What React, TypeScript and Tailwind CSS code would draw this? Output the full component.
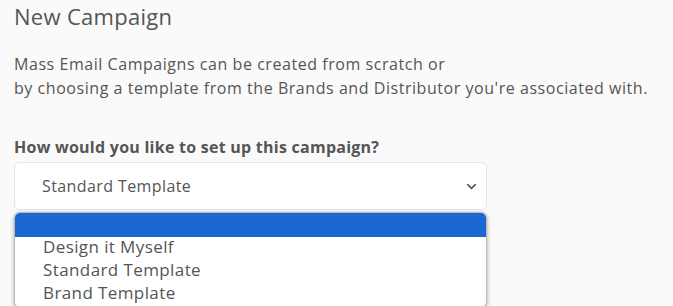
import { ChevronDown } from "lucide-react";

const options = ["Design it Myself", "Standard Template", "Brand Template"];

export default function App() {
  return (
    <div className="h-[306px] w-[673px] overflow-hidden bg-[#fafafa] px-[14px] pt-[2px] text-[#555] [font-family:'Open_Sans',sans-serif]">
      <h1 className="text-[22px] leading-[28px] font-normal tracking-[0.3px] text-[#555]">New Campaign</h1>

      <p className="mt-[22px] text-[16px] leading-[24px] tracking-[0.55px]">
        Mass Email Campaigns can be created from scratch or
        <br />
        by choosing a template from the Brands and Distributor you're associated with.
      </p>

      <label className="mt-[35px] block text-[16px] leading-[24px] font-bold tracking-[0.25px] text-[#555]">
        How would you like to set up this campaign?
      </label>

      <div className="relative mt-[3px] w-[473px]">
        <div className="flex h-[48px] items-center justify-between rounded-[5px] border border-[#e6e6e6] bg-white pr-[7px] pl-[27px] text-[16px] tracking-[0.4px]">
          <span>Standard Template</span>
          <ChevronDown size={15} strokeWidth={2.5} className="text-[#555]" />
        </div>

        <div className="absolute top-[50px] left-0 w-[473px] overflow-hidden rounded-[6px] border border-[#bbb] bg-white shadow-[0_1px_4px_rgba(0,0,0,0.35)]">
          <div className="h-[24px] bg-[#1a67d2]" />
          <ul className="-mt-[2px] pb-[3px] text-[17px] leading-[23px] tracking-[0.4px]">
            {options.map((o) => (
              <li key={o} className="pl-[28px]">
                {o}
              </li>
            ))}
          </ul>
        </div>
      </div>
    </div>
  );
}
